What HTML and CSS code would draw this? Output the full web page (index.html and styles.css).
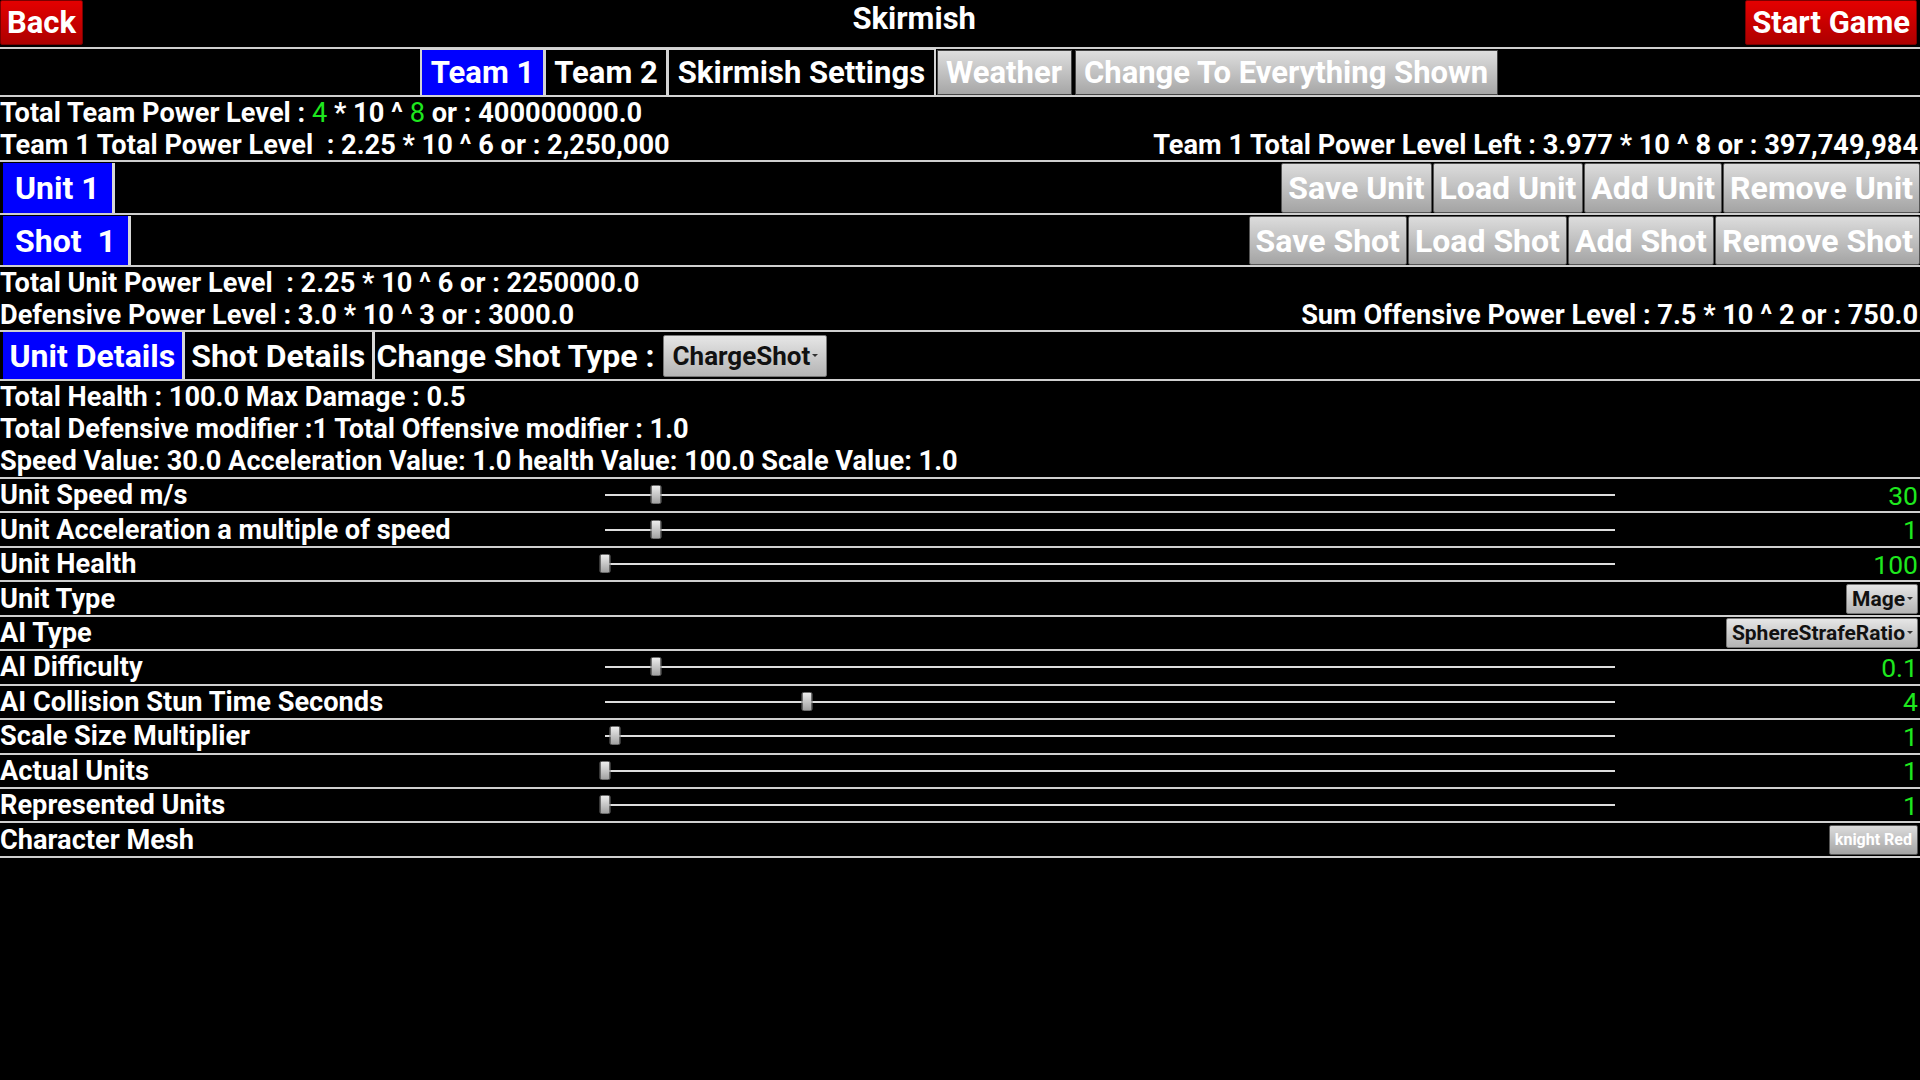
FILE: index.html
```html
<!DOCTYPE html>
<html lang="en">
<head>
  <meta charset="UTF-8">
  <meta name="viewport" content="width=device-width, initial-scale=1.0">
  <title>Skirmish</title>
  <link rel="stylesheet" href="styles.css">
</head>
<body>
  <!-- Top bar: back, screen title, start -->
  <header class="topbar">
    <button class="btn-red">Back</button>
    <h1 class="title">Skirmish</h1>
    <button class="btn-red">Start Game</button>
  </header>

  <!-- Team / settings tabs -->
  <nav class="tabs">
    <span class="tab tab-active">Team 1</span>
    <span class="tab">Team 2</span>
    <span class="tab">Skirmish Settings</span>
    <span class="tab tab-gray">Weather</span>
    <span class="tab tab-gray">Change To Everything Shown</span>
  </nav>

  <section class="info">
    <p>Total Team Power Level : <span class="green">4</span> * 10 ^ <span class="green">8</span> or : 400000000.0</p>
    <p class="split"><span>Team 1 Total Power Level &nbsp;: 2.25 * 10 ^ 6 or : 2,250,000</span><span>Team 1 Total Power Level Left : 3.977 * 10 ^ 8 or : 397,749,984</span></p>
  </section>

  <div class="pick-row">
    <span class="pick-tab">Unit 1</span>
    <div class="actions">
      <button class="btn-gray">Save Unit</button>
      <button class="btn-gray">Load Unit</button>
      <button class="btn-gray">Add Unit</button>
      <button class="btn-gray">Remove Unit</button>
    </div>
  </div>

  <div class="pick-row pick-row-shot">
    <span class="pick-tab">Shot &nbsp;1</span>
    <div class="actions">
      <button class="btn-gray">Save Shot</button>
      <button class="btn-gray">Load Shot</button>
      <button class="btn-gray">Add Shot</button>
      <button class="btn-gray">Remove Shot</button>
    </div>
  </div>

  <section class="info">
    <p>Total Unit Power Level &nbsp;: 2.25 * 10 ^ 6 or : 2250000.0</p>
    <p class="split"><span>Defensive Power Level : 3.0 * 10 ^ 3 or : 3000.0</span><span>Sum Offensive Power Level : 7.5 * 10 ^ 2 or : 750.0</span></p>
  </section>

  <div class="detail-tabs">
    <span class="pick-tab pick-tab-slim">Unit Details</span>
    <span class="detail-tab">Shot Details</span>
    <span class="detail-label">Change Shot Type :</span>
    <span class="dropdown dropdown-lg">ChargeShot</span>
  </div>

  <section class="info info-tall">
    <p>Total Health : 100.0 Max Damage : 0.5</p>
    <p>Total Defensive modifier :1 Total Offensive modifier : 1.0</p>
    <p>Speed Value: 30.0 Acceleration Value: 1.0 health Value: 100.0 Scale Value: 1.0</p>
  </section>

  <!-- Unit settings, one row per setting -->
  <div class="settings">
    <div class="setting">
      <span class="label">Unit Speed m/s</span>
      <div class="track"><span class="thumb" style="left: 5%"></span></div>
      <span class="value">30</span>
    </div>
    <div class="setting">
      <span class="label">Unit Acceleration a multiple of speed</span>
      <div class="track"><span class="thumb" style="left: 5%"></span></div>
      <span class="value">1</span>
    </div>
    <div class="setting">
      <span class="label">Unit Health</span>
      <div class="track"><span class="thumb" style="left: 0%"></span></div>
      <span class="value">100</span>
    </div>
    <div class="setting">
      <span class="label">Unit Type</span>
      <span class="control"><span class="dropdown">Mage</span></span>
    </div>
    <div class="setting">
      <span class="label">AI Type</span>
      <span class="control"><span class="dropdown">SphereStrafeRatio</span></span>
    </div>
    <div class="setting">
      <span class="label">AI Difficulty</span>
      <div class="track"><span class="thumb" style="left: 5%"></span></div>
      <span class="value">0.1</span>
    </div>
    <div class="setting">
      <span class="label">AI Collision Stun Time Seconds</span>
      <div class="track"><span class="thumb" style="left: 20%"></span></div>
      <span class="value">4</span>
    </div>
    <div class="setting">
      <span class="label">Scale Size Multiplier</span>
      <div class="track"><span class="thumb" style="left: 1%"></span></div>
      <span class="value">1</span>
    </div>
    <div class="setting">
      <span class="label">Actual Units</span>
      <div class="track"><span class="thumb" style="left: 0%"></span></div>
      <span class="value">1</span>
    </div>
    <div class="setting">
      <span class="label">Represented Units</span>
      <div class="track"><span class="thumb" style="left: 0%"></span></div>
      <span class="value">1</span>
    </div>
    <div class="setting">
      <span class="label">Character Mesh</span>
      <span class="control"><button class="btn-gray btn-small">knight Red</button></span>
    </div>
  </div>
</body>
</html>
```

FILE: styles.css
```css
/* Reset and base */
* {
  margin: 0;
  padding: 0;
  box-sizing: border-box;
}

body {
  background: #000;
  color: #fff;
  font-family: Roboto, "Noto Sans", sans-serif;
  font-weight: 700;
  width: 1920px;
  height: 1080px;
  overflow: hidden;
}

button {
  font-family: inherit;
  cursor: pointer;
}

.green {
  color: #1ee81e;
  font-weight: 400;
}

/* Top bar */
.topbar {
  display: flex;
  align-items: flex-start;
  height: 49px;
  border-bottom: 2px solid #cfcfcf;
  padding-right: 3px;
}

.title {
  flex: 1;
  text-align: center;
  font-size: 31px;
  font-weight: 700;
  line-height: 38px;
}

.btn-red {
  height: 45px;
  padding: 0 6px;
  font-size: 31px;
  font-weight: 700;
  color: #fff;
  background: linear-gradient(#e40000, #ad0000);
  border: 1px solid #7a0000;
  border-radius: 2px;
}

/* Tabs */
.tabs {
  display: flex;
  justify-content: center;
  gap: 3px;
  height: 48px;
  border-bottom: 2px solid #cfcfcf;
}

.tab {
  display: flex;
  align-items: center;
  padding: 0 8.5px;
  font-size: 31px;
  font-weight: 700;
  background: #000;
  box-shadow: 0 0 0 2px #d4d4d4;
  margin-top: 1px;
}

.tab-active {
  background: #0000ff;
}

.tab-gray {
  color: #fff;
  background: linear-gradient(#dedede, #a6a6a6);
  border: 1px solid #444;
  box-shadow: none;
}

/* Read-only text blocks */
.info {
  height: 65px;
  border-bottom: 2px solid #cfcfcf;
  font-size: 27.2px;
  line-height: 32px;
}

.info-tall {
  height: 98px;
}

.split {
  display: flex;
  justify-content: space-between;
  padding-right: 2px;
}

/* Unit / shot selector rows */
.pick-row {
  display: flex;
  align-items: stretch;
  height: 53px;
  border-bottom: 2px solid #cfcfcf;
  padding-top: 1px;
}

.pick-row-shot {
  height: 52px;
}

.pick-tab {
  display: flex;
  align-items: center;
  margin-left: 3px;
  padding: 0 12px;
  font-size: 32px;
  font-weight: 700;
  background: #0000ff;
  border-right: 3px solid #d8d8d8;
}

.pick-tab-slim {
  padding: 0 6.5px;
}

.actions {
  display: flex;
  margin-left: auto;
  gap: 1px;
}

.btn-gray {
  padding: 0 6px;
  font-size: 32px;
  font-weight: 700;
  color: #fff;
  background: linear-gradient(#dcdcdc, #a4a4a4);
  border: 1px solid #555;
  border-radius: 2px;
}

/* Unit details / shot details bar */
.detail-tabs {
  display: flex;
  align-items: stretch;
  height: 49px;
  border-bottom: 2px solid #cfcfcf;
}

.detail-tab,
.detail-label {
  display: flex;
  align-items: center;
  padding: 0 6.5px;
  font-size: 32px;
  font-weight: 700;
  border-right: 3px solid #d8d8d8;
}

.detail-label {
  padding: 0 2px;
  border-right: none;
}

.dropdown {
  display: inline-flex;
  align-items: center;
  height: 30px;
  padding: 0 4px 0 5px;
  font-size: 21px;
  font-weight: 700;
  color: #111;
  background: linear-gradient(#e6e6e6, #b4b4b4);
  border: 1px solid #777;
  border-radius: 2px;
}

.dropdown::after {
  content: "";
  margin-left: 2px;
  border-left: 3px solid transparent;
  border-right: 3px solid transparent;
  border-top: 3px solid #333;
}

.dropdown-lg {
  align-self: center;
  height: 42px;
  margin-left: 6px;
  padding: 0 8px 0 9px;
  font-size: 26px;
}

/* Setting rows with sliders */
.setting {
  display: grid;
  grid-template-columns: 605px 1010px 1fr;
  align-items: center;
  height: 34.45px;
  border-bottom: 2px solid #cfcfcf;
  font-size: 27.2px;
}

.label {
  line-height: 30px;
}

.track {
  position: relative;
  height: 2px;
  background: #dedede;
}

.thumb {
  position: absolute;
  top: -9px;
  width: 11px;
  height: 19px;
  transform: translateX(-50%);
  background: linear-gradient(#ececec, #a2a2a2);
  border: 1px solid #6e6e6e;
  border-radius: 2px;
}

.value {
  text-align: right;
  padding-right: 2px;
  color: #1ee81e;
  font-weight: 400;
  font-size: 26.5px;
}

.control {
  grid-column: 2 / 4;
  display: flex;
  justify-content: flex-end;
  padding-right: 2px;
}

.btn-small {
  height: 30px;
  padding: 0 5px;
  font-size: 16px;
}
```
